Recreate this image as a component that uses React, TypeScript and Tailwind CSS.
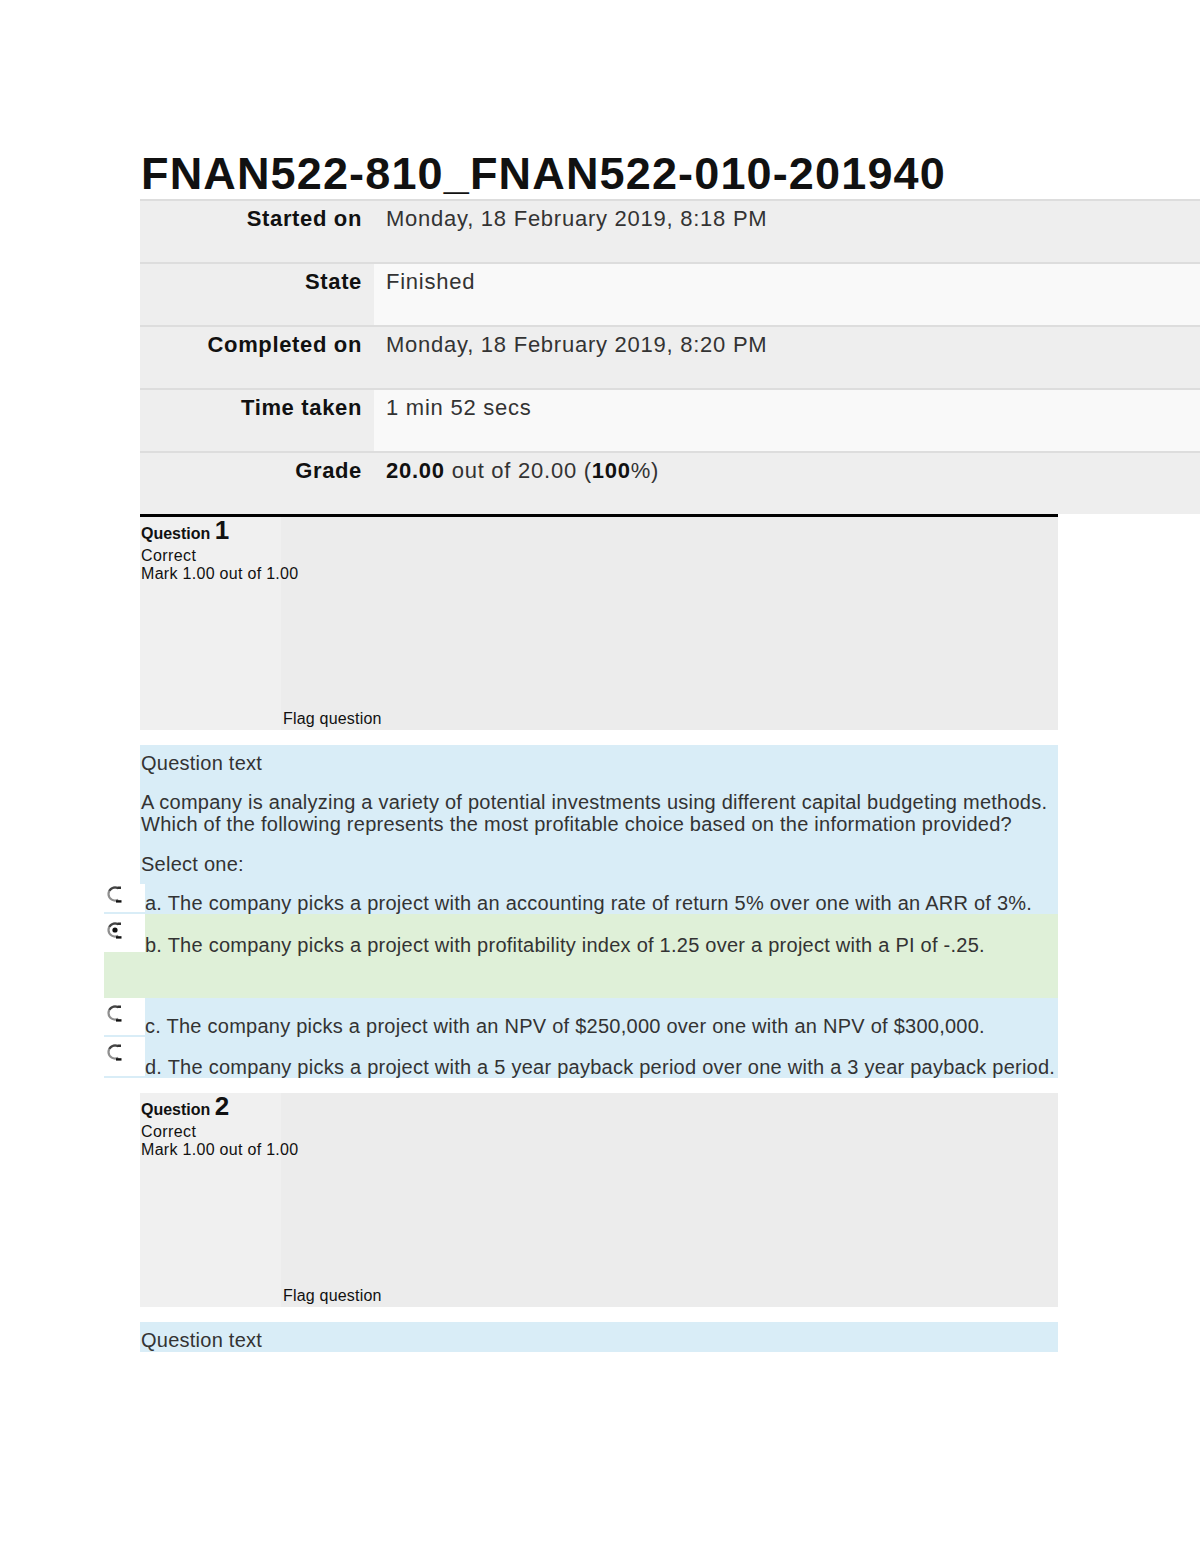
import React from 'react';

type Row = { label: string; value: React.ReactNode; alt: boolean };

const rows: Row[] = [
  { label: 'Started on', value: 'Monday, 18 February 2019, 8:18 PM', alt: false },
  { label: 'State', value: 'Finished', alt: true },
  { label: 'Completed on', value: 'Monday, 18 February 2019, 8:20 PM', alt: false },
  { label: 'Time taken', value: '1 min 52 secs', alt: true },
  {
    label: 'Grade',
    value: (
      <>
        <b className="text-[#111]">20.00</b> out of 20.00 (<b className="text-[#111]">100</b>%)
      </>
    ),
    alt: false,
  },
];

function Radio({ checked = false }: { checked?: boolean }) {
  return (
    <svg width="18" height="19" viewBox="0 0 18 19">
      <path d="M11.25 3.37 A6.5 6.5 0 1 0 11.25 14.63" fill="none" stroke="#8f8f8f" strokeWidth="2.2" />
      <path d="M2.37 5.75 A6.5 6.5 0 0 1 11.25 3.37" fill="none" stroke="#444" strokeWidth="2.2" />
      <rect x="10.5" y="1.5" width="3.5" height="2.5" fill="#333" />
      <rect x="9" y="15.2" width="5.5" height="2.4" fill="#111" />
      {checked && <circle cx="8" cy="9" r="2.6" fill="#111" />}
    </svg>
  );
}

function QuestionHeader({ n, border }: { n: number; border?: boolean }) {
  return (
    <div
      className={`flex flex-col justify-between bg-[linear-gradient(to_right,#f0f0f0_141px,#ececec_141px)] pl-[1px] text-[#111] ${
        border ? 'h-[216px] border-t-[3px] border-black' : 'h-[214px]'
      }`}
    >
      <div>
        <div className="text-[16px] leading-[26px] font-bold">
          Question <span className="text-[26px]">{n}</span>
        </div>
        <div className="mt-[0px] text-[16px] leading-[18px] tracking-[0.4px]">Correct</div>
        <div className="text-[16px] leading-[18px] tracking-[0.3px]">Mark 1.00 out of 1.00</div>
      </div>
      <div className="pb-[2px] pl-[142px] text-[16px] leading-[18px] tracking-[0.2px]">Flag question</div>
    </div>
  );
}

function Option({ label, height }: { label: string; height: string }) {
  return (
    <div className={`flex ${height}`}>
      <div className="w-[41px] border-b-2 border-[#d9edf7] bg-white pl-[3px] pt-[6px]">
        <Radio />
      </div>
      <div className="flex flex-1 items-end bg-[#d9edf7] whitespace-nowrap leading-[22px]">{label}</div>
    </div>
  );
}

export default function App() {
  return (
    <div className="min-h-screen bg-white font-['Liberation_Sans',Arial,sans-serif] text-[#333]">
      <div className="pl-[140px] pt-[148px] pb-[200px]">
        <h1 className="pl-[1px] text-[45px] font-bold leading-[51px] tracking-[1.15px] text-[#111]">
          FNAN522-810_FNAN522-010-201940
        </h1>

        {/* summary table */}
        <div>
          {rows.map((r) => (
            <div key={r.label} className="flex h-[63px] border-t-2 border-[#dddddd] bg-[#eeeeee]">
              <div className="w-[234px] shrink-0 pt-[5px] pr-[12px] text-right text-[22px] font-bold leading-[26px] tracking-[0.65px] text-[#111]">
                {r.label}
              </div>
              <div
                className={`flex-1 pt-[5px] pl-[12px] text-[22px] leading-[26px] tracking-[0.75px] ${
                  r.alt ? 'bg-[#f9f9f9]' : ''
                }`}
              >
                {r.value}
              </div>
            </div>
          ))}
        </div>

        <div className="w-[918px]">
          <QuestionHeader n={1} border />

          <div className="mt-[15px] bg-[#d9edf7] pt-[6px] text-[20px] tracking-[0.25px]">
            <div className="pl-[1px] leading-[24px]">Question text</div>
            <p className="mt-[16px] pl-[1px] leading-[22px]">
              A company is analyzing a variety of potential investments using different capital budgeting methods.
              <br />
              Which of the following represents the most profitable choice based on the information provided?
            </p>
            <div className="mt-[18px] pl-[1px] leading-[22px]">Select one:</div>
            <div className="h-[9px]" />
          </div>

          <div className="-ml-[36px] text-[20px] tracking-[0.25px]">
            <div className="flex h-[30px]">
              <div className="w-[41px] border-b-2 border-[#d9edf7] bg-white pl-[3px] pt-[1px]">
                <Radio />
              </div>
              <div className="flex flex-1 items-end bg-[#d9edf7] whitespace-nowrap leading-[22px]">
                a. The company picks a project with an accounting rate of return 5% over one with an ARR of 3%.
              </div>
            </div>

            <div className="flex h-[84px]">
              <div className="flex w-[41px] flex-col">
                <div className="h-[38px] bg-white pl-[3px] pt-[7px]">
                  <Radio checked />
                </div>
                <div className="flex-1 bg-[#dff0d8]" />
              </div>
              <div className="flex-1 bg-[#dff0d8] pt-[20px] whitespace-nowrap leading-[22px]">
                b. The company picks a project with profitability index of 1.25 over a project with a PI of -.25.
              </div>
            </div>

            <Option height="h-[39px]" label="c. The company picks a project with an NPV of $250,000 over one with an NPV of $300,000." />
            <Option height="h-[41px]" label="d. The company picks a project with a 5 year payback period over one with a 3 year payback period." />
          </div>

          <div className="mt-[15px]">
            <QuestionHeader n={2} />
          </div>

          <div className="mt-[15px] h-[30px] bg-[#d9edf7] pt-[6px] pl-[1px] text-[20px] leading-[24px] tracking-[0.25px]">
            Question text
          </div>
        </div>
      </div>
    </div>
  );
}
